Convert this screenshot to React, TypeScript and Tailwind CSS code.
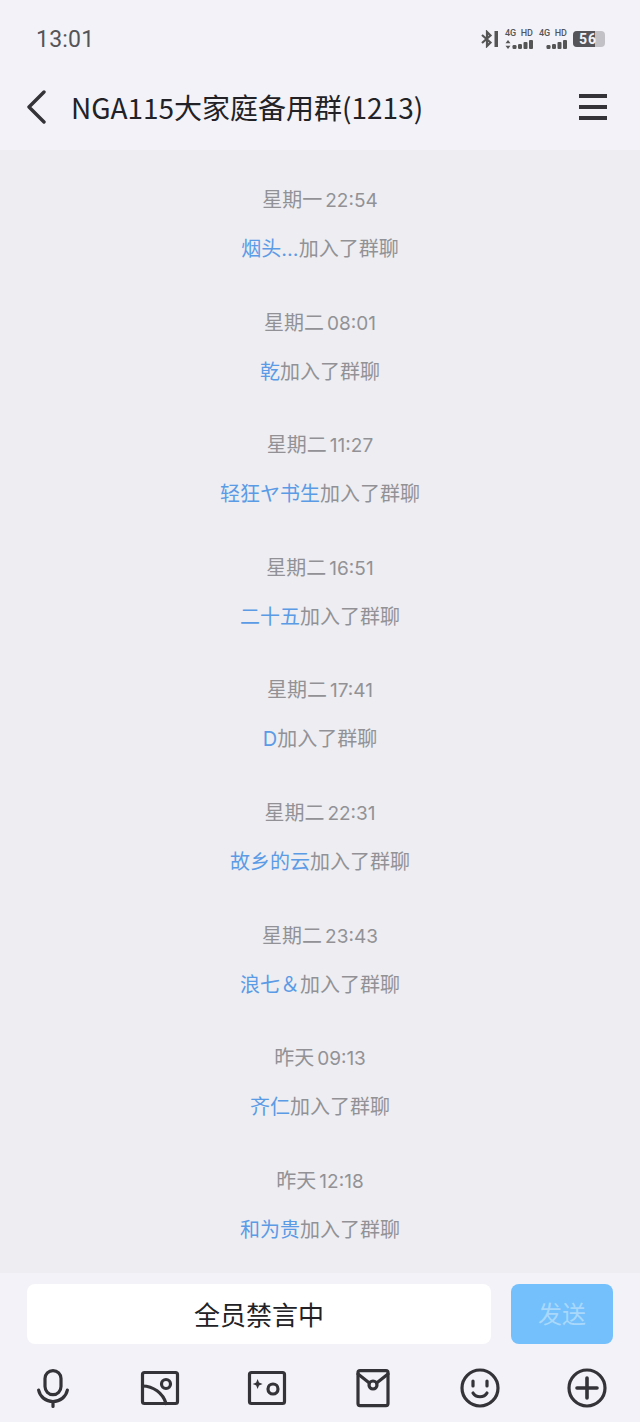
import React from "react";

const FONT = '"Noto Sans CJK SC", sans-serif';

const rows: [string, string, string][] = [
  ["星期一", "22:54", "烟头..."],
  ["星期二", "08:01", "乾"],
  ["星期二", "11:27", "轻狂ヤ书生"],
  ["星期二", "16:51", "二十五"],
  ["星期二", "17:41", "D"],
  ["星期二", "22:31", "故乡的云"],
  ["星期二", "23:43", "浪七＆"],
  ["昨天", "09:13", "齐仁"],
  ["昨天", "12:18", "和为贵"],
];

function Signal({ arrows }: { arrows?: boolean }) {
  return (
    <div className="flex flex-col items-stretch w-[28px] gap-[2px]">
      <span className="text-[9px] leading-[9px] font-medium text-[#555] whitespace-nowrap font-['Roboto',sans-serif] flex justify-between">
        <span>4G</span>
        <span>HD</span>
      </span>
      <svg width="28" height="9" viewBox="0 0 28 9">
        {arrows && <path d="M3 0 L5.5 3.2 H0.5 Z M3 9 L5.5 5.8 H0.5 Z" fill="#555" />}
        <rect x="7.5" y="5" width="4" height="4" rx="1.2" fill="#555" />
        <rect x="13" y="4" width="4" height="5" rx="1.2" fill="#555" />
        <rect x="18.5" y="2" width="4" height="7" rx="1" fill="#555" />
        <rect x="24" y="0" width="4" height="9" rx="1" fill="#555" />
      </svg>
    </div>
  );
}

function Icon({ children }: { children: React.ReactNode }) {
  return (
    <svg width="44" height="44" viewBox="0 0 44 44" fill="none" stroke="#333338" strokeWidth="3.2" strokeLinecap="round" strokeLinejoin="round">
      {children}
    </svg>
  );
}

export default function App() {
  return (
    <div className="w-[640px] h-[1422px] flex flex-col bg-[#ededf2] overflow-hidden" style={{ fontFamily: FONT }}>
      <header className="h-[150px] shrink-0 bg-[#f2f2f8] flex flex-col">
        <div className="h-[78px] shrink-0 flex items-center justify-between pl-[36px] pr-[35px]">
          <span className="text-[23px] font-normal tracking-[0.2px] text-[#555559] leading-none font-['Roboto',sans-serif]">13:01</span>
          <div className="flex items-center gap-[6px]">
            <svg width="18" height="18" viewBox="0 0 18 18" fill="none" stroke="#555" strokeWidth="2.2">
              <path d="M1 5 L9.5 12.5 L6 16 V2 L9.5 5.5 L1 13" />
              <rect x="13.5" y="1" width="3.5" height="16" fill="#555" stroke="none" />
            </svg>
            <Signal arrows />
            <Signal />
            <div className="relative w-[32px] h-[16px] rounded-[4px] bg-[#c2c2c6] flex items-center">
              <div className="absolute left-0 top-0 bottom-0 w-[22px] rounded-l-[4px] bg-[#555559]" />
              <span className="relative pl-[6px] text-[14px] font-bold tracking-[1px] text-[#f2f2f8] leading-[16px] font-['Roboto',sans-serif]">56</span>
            </div>
          </div>
        </div>
        <div className="flex-1 flex items-center pl-[26px] pr-[33px] pb-[14px]">
          <svg width="20" height="34" viewBox="0 0 20 34" fill="none" stroke="#333338" strokeWidth="3.4" strokeLinecap="round" strokeLinejoin="round" className="shrink-0">
            <path d="M18 2 L3 17 L18 32" />
          </svg>
          <span className="ml-[25px] text-[28px] leading-none text-[#222226] whitespace-nowrap">NGA115大家庭备用群(1213)</span>
          <div className="ml-auto w-[28px] flex flex-col gap-[7px]">
            <div className="h-[4px] bg-[#333338]" />
            <div className="h-[4px] bg-[#333338]" />
            <div className="h-[4px] bg-[#333338]" />
          </div>
        </div>
      </header>

      <main className="flex-1 flex flex-col items-center pt-[38px] overflow-hidden font-[Inter,'Noto_Sans_CJK_SC',sans-serif]">
        {rows.map(([day, time, name]) => (
          <div key={day + time} className="h-[122.6px] shrink-0 flex flex-col items-center gap-[24px] text-[20px] leading-[24px] text-[#929296] whitespace-nowrap">
            <div>
              {day}
              <span className="ml-[3px] text-[19px]">{time}</span>
            </div>
            <div>
              <span className="text-[#5b9be6]">{name}</span>加入了群聊
            </div>
          </div>
        ))}
      </main>

      <footer className="h-[149px] shrink-0 bg-[#f2f2f8] flex flex-col">
        <div className="flex gap-[20px] px-[27px] pt-[11px]">
          <div className="w-[464px] h-[60px] pb-[2px] bg-white rounded-[8px] flex items-center justify-center text-[26px] text-[#222226]">全员禁言中</div>
          <div className="w-[102px] h-[60px] pb-[2px] bg-[#74c0fc] rounded-[8px] flex items-center justify-center text-[24px] text-[#a9d8fb]">发送</div>
        </div>
        <div className="flex-1 grid grid-cols-6 pt-[22px]">
          <div className="flex justify-center">
            <Icon>
              <rect x="14" y="4.6" width="16" height="24" rx="8" />
              <path d="M7.6 24 C9 31 15 35.5 22 35.5 C29 35.5 35 31 36.4 24 M22 35.5 V40.5" />
            </Icon>
          </div>
          <div className="flex justify-center">
            <Icon>
              <rect x="4.5" y="6.5" width="35" height="31" rx="2" />
              <circle cx="28" cy="18" r="4.5" />
              <path d="M4.5 20 C15 20 25 27 28 37.5" />
            </Icon>
          </div>
          <div className="flex justify-center">
            <Icon>
              <rect x="4.5" y="6.5" width="35" height="31" rx="2" />
              <circle cx="28" cy="23" r="5" />
              <path d="M12.6 13 L14 16.6 L17.6 18 L14 19.4 L12.6 23 L11.2 19.4 L7.6 18 L11.2 16.6 Z" fill="#333338" stroke="none" />
            </Icon>
          </div>
          <div className="flex justify-center">
            <Icon>
              <rect x="7" y="4.6" width="30" height="35" rx="2" />
              <path d="M7 8 L18.4 17 M37 8 L25.6 17" />
              <circle cx="22" cy="19" r="4" />
            </Icon>
          </div>
          <div className="flex justify-center">
            <Icon>
              <circle cx="22" cy="22" r="18" />
              <path d="M15 15 V20 M29 15 V20" />
              <path d="M15 27 C18 32 26 32 29 27" />
            </Icon>
          </div>
          <div className="flex justify-center">
            <Icon>
              <circle cx="22" cy="22" r="18" />
              <path d="M12 22 H32 M22 12 V32" strokeWidth="3.6" />
            </Icon>
          </div>
        </div>
      </footer>
    </div>
  );
}
